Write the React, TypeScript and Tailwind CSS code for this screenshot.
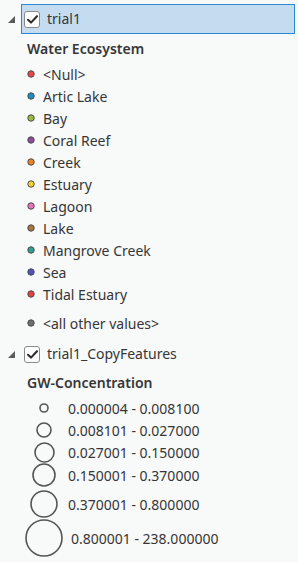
import React from "react";

const items: [string, string][] = [
  ["<Null>", "#e8474f"],
  ["Artic Lake", "#1b8fc4"],
  ["Bay", "#9cbc3c"],
  ["Coral Reef", "#8e4a9e"],
  ["Creek", "#ec8424"],
  ["Estuary", "#f2d432"],
  ["Lagoon", "#ea72c2"],
  ["Lake", "#a8773e"],
  ["Mangrove Creek", "#2fa18a"],
  ["Sea", "#5251bf"],
  ["Tidal Estuary", "#e24444"],
];

const sizes: [string, number, string][] = [
  ["0.000004 - 0.008100", 8, "h-[22px]"],
  ["0.008101 - 0.027000", 14, "h-[22px]"],
  ["0.027001 - 0.150000", 19, "h-[22px]"],
  ["0.150001 - 0.370000", 22, "h-[24px]"],
  ["0.370001 - 0.800000", 26, "h-[34px]"],
  ["0.800001 - 238.000000", 36, "h-[34px]"],
];

function Triangle() {
  return (
    <svg width="8" height="8" viewBox="0 0 8 8" className="block">
      <polygon points="7,0 7,7 0,7" fill="#5a5a5a" />
    </svg>
  );
}

function Check() {
  return (
    <div className="w-[16px] h-[17px] rounded-[3px] border border-[#8a8a8a] bg-white flex items-center justify-center">
      <svg width="13" height="13" viewBox="0 0 13 13">
        <path d="M2 6.8 L5 9.6 L11 3.2" fill="none" stroke="#2e2e2e" strokeWidth="2.1" strokeLinecap="round" strokeLinejoin="round" />
      </svg>
    </div>
  );
}

function Dot({ color }: { color: string }) {
  return (
    <svg width="8" height="8" viewBox="0 0 8 8" className="block">
      <circle cx="4" cy="4" r="3.2" fill={color} stroke="#4a4a4a" strokeWidth="1" />
    </svg>
  );
}

function Ring({ d }: { d: number }) {
  const s = d + 2;
  return (
    <svg width={s} height={s} viewBox={`0 0 ${s} ${s}`} className="block">
      <circle cx={s / 2} cy={s / 2} r={d / 2} fill="none" stroke="#555" strokeWidth="1.6" />
    </svg>
  );
}

export default function App() {
  return (
    <div
      className="w-[298px] h-[562px] bg-[#f8f9f9] overflow-hidden text-[14px] text-[#363636]"
      style={{ fontFamily: '"Noto Sans", "Open Sans", sans-serif' }}
    >
      <div className="flex items-center pt-[4px]">
        <div className="w-[21px] flex justify-center pl-[3px] pt-[2px]">
          <Triangle />
        </div>
        <div className="w-[274px] h-[30px] bg-[#c5dcf0] border border-[#2d86d6] flex items-center pl-[2px] gap-[7px]">
          <Check />
          <span className="leading-none pb-[1px]">trial1</span>
        </div>
      </div>
      <div className="h-[22px] mt-[3px] pl-[27px] flex items-center font-semibold">Water Ecosystem</div>
      <div className="mt-[4px]">
        {items.map(([label, c]) => (
          <div key={label} className="h-[22px] flex items-center pl-[27px] gap-[8px]">
            <Dot color={c} />
            <span>{label}</span>
          </div>
        ))}
      </div>
      <div className="h-[22px] mt-[7px] flex items-center pl-[27px] gap-[8px]">
        <Dot color="#6e6e6e" />
        <span>{"<all other values>"}</span>
      </div>
      <div className="flex items-center mt-[5px] h-[30px]">
        <div className="w-[21px] flex justify-center pl-[3px] pt-[2px]">
          <Triangle />
        </div>
        <div className="flex items-center pl-[3px] gap-[7px]">
          <Check />
          <span className="leading-none pb-[1px]">trial1_CopyFeatures</span>
        </div>
      </div>
      <div className="h-[22px] mt-[2px] pl-[27px] flex items-center font-semibold">GW-Concentration</div>
      <div className="mt-[4px]">
        {sizes.map(([label, d, h], i) => (
          <div key={label} className={`${h} flex items-center pl-[25px]`}>
            <div className="w-[38px] flex justify-center">
              <Ring d={d} />
            </div>
            <span className={i === 5 ? "ml-[8px]" : "ml-[5px]"}>{label}</span>
          </div>
        ))}
      </div>
    </div>
  );
}
